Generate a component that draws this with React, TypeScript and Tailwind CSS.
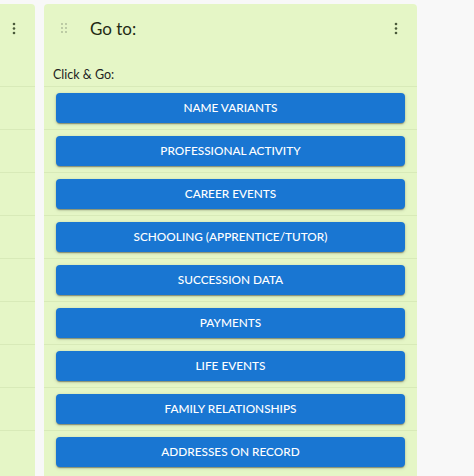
import React from 'react';

const LINKS = [
  'Name Variants',
  'Professional Activity',
  'Career Events',
  'Schooling (Apprentice/Tutor)',
  'Succession Data',
  'Payments',
  'Life Events',
  'Family Relationships',
  'Addresses on Record',
];

const FONT = { fontFamily: 'Lato, "Open Sans", sans-serif' };

function Kebab() {
  return (
    <svg width="4" height="13" viewBox="0 0 4 13" className="text-[#4a5a3a]">
      <circle cx="2" cy="2" r="1.3" fill="currentColor" />
      <circle cx="2" cy="6.5" r="1.3" fill="currentColor" />
      <circle cx="2" cy="11" r="1.3" fill="currentColor" />
    </svg>
  );
}

function Grip() {
  return (
    <svg width="6" height="10" viewBox="0 0 6 10" className="text-[#a9b896]">
      {[1, 5].map((x) =>
        [1, 5, 9].map((y) => <circle key={`${x}-${y}`} cx={x} cy={y} r="0.9" fill="currentColor" />)
      )}
    </svg>
  );
}

export default function App() {
  return (
    <div className="w-[474px] h-[476px] overflow-hidden bg-[#f8f8f8] flex gap-[9px] pt-[4px]" style={FONT}>
      {/* Left (collapsed) panel */}
      <div className="w-[35px] shrink-0 bg-[#e5f6c6] rounded-tr-[4px] flex flex-col">
        <div className="h-[82px] flex pl-[12px] pt-[18px]">
          <Kebab />
        </div>
        {LINKS.map((l) => (
          <div key={l} className="h-[43px] border-t border-[#d8eab8]" />
        ))}
      </div>

      {/* Go to panel */}
      <div className="w-[373px] shrink-0 bg-[#e5f6c6] rounded-t-[4px] flex flex-col">
        <div className="h-[82px] flex flex-col">
          <div className="flex items-center h-[48px] pl-[17px] pr-[19px]">
            <Grip />
            <span className="ml-[23px] text-[17px] text-[#1f2a14] leading-none">Go to:</span>
            <div className="flex-1" />
            <Kebab />
          </div>
          <div className="pl-[9px] pt-[17px] text-[12.5px] text-[#222] leading-none">Click &amp; Go:</div>
        </div>
        {LINKS.map((l) => (
          <div key={l} className="h-[43px] border-t border-[#d8eab8] px-[12px] pt-[6px]">
            <button className="w-full h-[30px] rounded-[4px] bg-[#1976d2] text-white uppercase text-[11.8px] font-medium shadow-[0_2px_1px_-1px_rgba(0,0,0,0.25),0_1px_2px_0_rgba(0,0,0,0.2),0_1px_4px_0_rgba(0,0,0,0.12)]">
              {l}
            </button>
          </div>
        ))}
      </div>
    </div>
  );
}
